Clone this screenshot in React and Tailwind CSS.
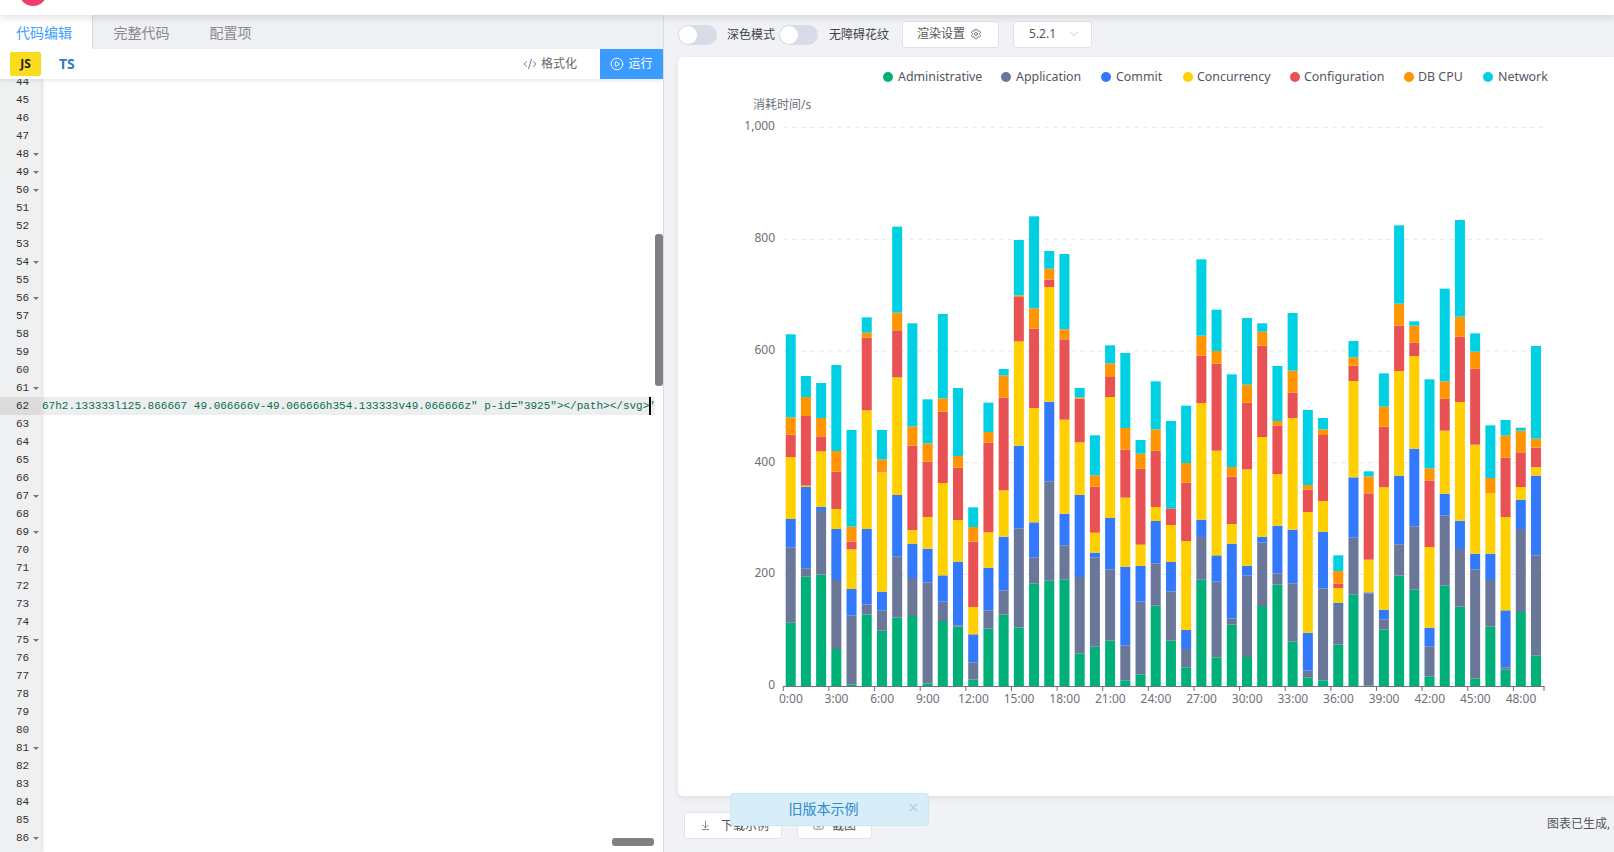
import React from "react";
import { Settings, ArrowDownToLine, Camera, ChevronDown, CirclePlay, CodeXml, X } from "lucide-react";

const COLORS = ["#00b078", "#6b7799", "#3279fb", "#ffd000", "#e95254", "#ff9500", "#00d0e3"];
const LEGEND = [
  ["Administrative", 888, 898],
  ["Application", 1006, 1016],
  ["Commit", 1106, 1116],
  ["Concurrency", 1188, 1197],
  ["Configuration", 1295, 1304],
  ["DB CPU", 1409, 1418],
  ["Network", 1488, 1498],
];
const BARS = [
  [1268,1043,957,771,704,652,403],[1130,1105,861,857,648,591,528],[1124,933,921,754,709,654,549],
  [1347,1140,987,927,815,753,495],[1453,1246,1167,1048,1025,980,690],[1244,1213,987,631,413,398,352],
  [1292,1232,1175,815,811,778,690],[1253,1069,885,532,391,338,80],[1248,1134,1031,990,737,679,370],
  [1450,1147,1046,951,785,730,598],[1263,1205,1126,849,635,595,342],[1280,1276,1085,960,803,768,564],
  [1439,1387,1303,1221,1025,981,922],[1286,1231,1103,997,728,696,608],[1244,1171,1010,871,593,526,507],
  [1282,985,737,424,291,286,120],[1151,1072,967,624,386,325,49],[1142,844,605,261,239,206,153],
  [1138,1036,941,659,418,388,162],[1360,1131,885,727,596,592,564],[1340,1072,1058,998,860,826,706],
  [1322,1108,954,591,531,490,436],[1441,1336,1100,893,749,684,459],[1423,1205,1098,1034,806,761,720],
  [1217,1090,963,921,752,688,544],[1322,1174,1086,975,925,925,663],[1402,1347,1290,1023,848,789,617],
  [1139,1011,959,609,467,407,178],[1372,1145,1066,752,491,453,329],[1274,1255,1031,972,830,801,523],
  [1371,1126,1097,808,608,554,354],[1218,1028,1011,711,437,395,370],[1154,1120,977,822,677,663,498],
  [1325,1150,989,654,578,512,339],[1432,1412,1298,936,869,855,630],[1441,1165,995,903,705,688,654],
  [1334,1215,1209,1164,1151,1113,1066],[1184,1013,832,543,497,472,423],[1456,1180,1177,1079,880,829,814],
  [1289,1258,1229,862,680,620,520],[1127,1033,827,513,377,311,76],[1169,979,746,468,428,377,364],
  [1429,1339,1283,1041,842,805,538],[1157,946,881,692,596,544,266],[1220,1047,962,606,410,350,60],
  [1435,1108,1061,734,506,455,400],[1280,1140,1061,880,880,834,676],[1408,1402,1231,951,773,706,660],
  [1236,987,899,861,757,692,683],[1366,1066,827,801,743,716,438],
];
const FOLDS = [48, 49, 50, 54, 56, 61, 67, 69, 75, 81, 86];
const LINES = Array.from({ length: 43 }, (_, i) => 44 + i);
const FONT = "'Noto Sans','Noto Sans CJK SC',sans-serif";
const MONO = "'Liberation Mono',monospace";
const toY = (z) => 200 + z / 3;

function Chart() {
  const base = 686;
  const yTicks = [[0, 686], [200, 574.3], [400, 462.7], [600, 351], [800, 239.3], [1000, 127.3]];
  const left = 783.3, step = 15.21;
  return (
    <svg viewBox="678 57 936 739" className="w-full h-full block" style={{ fontFamily: FONT }}>
      {LEGEND.map(([name, cx, tx], i) => (
        <g key={name}>
          <circle cx={cx} cy={77} r={5} fill={COLORS[i]} />
          <text x={tx} y={81} fontSize="12.4" fill="#55565f">{name}</text>
        </g>
      ))}
      <text x={753} y={109} fontSize="12" fill="#6e7079">消耗时间/s</text>
      {yTicks.map(([v, y]) => (
        <g key={v}>
          <text x={775} y={y + 3} textAnchor="end" fontSize="12" fill="#6e7079">{v.toLocaleString("en-US")}</text>
          {v > 0 && <line x1={783} x2={1543} y1={y} y2={y} stroke="#e8e8e8" strokeDasharray="5 4" />}
        </g>
      ))}
      {BARS.map((b, i) => {
        const x = 785.7 + i * step;
        let prev = base;
        return (
          <g key={i}>
            {b.map((z, s) => {
              const top = toY(z);
              const r = <rect key={s} x={x} y={top} width={10} height={Math.max(prev - top, 0)} fill={COLORS[s]} />;
              prev = top;
              return r;
            })}
          </g>
        );
      })}
      <line x1={783} x2={1544.5} y1={686.5} y2={686.5} stroke="#6e7079" />
      {Array.from({ length: 17 }, (_, i) => {
        const x = left + i * step * 3;
        return (
          <g key={i}>
            <line x1={x} x2={x} y1={686} y2={691} stroke="#6e7079" />
            <text x={x + 7.6} y={703} textAnchor="middle" fontSize="12" fill="#6e7079">{i * 3}:00</text>
          </g>
        );
      })}
      <line x1={1544} x2={1544} y1={686} y2={691} stroke="#6e7079" />
    </svg>
  );
}

function Toggle() {
  return (
    <div className="w-[39px] h-5 rounded-full bg-[#d7dce6] p-[1px] shrink-0">
      <div className="w-[18px] h-[18px] rounded-full bg-white" />
    </div>
  );
}

export default function App() {
  return (
    <div className="relative w-[1614px] h-[852px] overflow-hidden bg-[#f0f2f6] text-[12px]" style={{ fontFamily: FONT }}>
      <header className="relative h-[15px] bg-white shadow-[0_2px_9px_rgba(0,0,0,0.14)] z-20 overflow-hidden">
        <div className="absolute left-[19px] -top-[22px] w-7 h-7 rounded-full bg-[#ee3f6c]" />
      </header>
      <div className="flex h-[837px]">
        <section className="w-[664px] shrink-0 flex flex-col border-r border-[#d9dbe0] bg-white overflow-hidden">
          <div className="h-[34px] flex bg-[#eef0f3] shrink-0 text-[14px]">
            <div className="w-[93px] bg-white border-r border-[#d5d8de] text-[#409eff] flex items-center pl-[16px]">代码编辑</div>
            <div className="w-[97px] text-[#8a8a8a] flex items-center justify-center">完整代码</div>
            <div className="w-[81px] text-[#8a8a8a] flex items-center justify-center">配置项</div>
          </div>
          <div className="relative z-10 h-[30px] flex items-center bg-white shadow-[0_2px_3px_rgba(0,0,0,0.08)] shrink-0">
            <div className="ml-[10px] w-[31px] h-6 rounded-[2px] bg-[#fadc1e] text-[#222] font-bold text-[12px] flex items-center justify-center">JS</div>
            <div className="ml-[18px] mb-[1px] text-[#3178c6] font-bold text-[14px]">TS</div>
            <div className="ml-auto mr-[23px] flex items-center gap-[4px] text-[#666]">
              <CodeXml size={14} strokeWidth={1.5} />
              <span>格式化</span>
            </div>
            <div className="w-[63px] h-full bg-[#3a9cff] text-white flex items-center justify-center gap-[4px]">
              <CirclePlay size={14} strokeWidth={1.6} />
              <span>运行</span>
            </div>
          </div>
          <div className="relative flex-1 flex overflow-hidden">
            <div className="w-[41px] shrink-0 bg-[#eef0f2] shadow-[2px_0_3px_rgba(0,0,0,0.12)] -mt-[6px] relative z-[1]" style={{ fontFamily: MONO }}>
              {LINES.map((n) => (
                <div key={n} className={`relative h-[18px] leading-[18px] text-[11px] text-[#333] pl-[16px] ${n === 62 ? "bg-[#dcdcdc]" : ""}`}>
                  {n}
                  {FOLDS.includes(n) && <span className="absolute left-[33px] top-[8px] w-0 h-0 border-x-[3px] border-x-transparent border-t-[3px] border-t-[#777]" />}
                </div>
              ))}
            </div>
            <div className="flex-1 min-w-0 -mt-[6px] pl-[1px] overflow-hidden">
              <div className="h-[324px]" />
              <div className="h-[18px] w-[613px] leading-[18px] bg-[#eceef0] whitespace-pre text-[11px] text-[#0a6e4a] relative overflow-hidden" style={{ fontFamily: MONO }}>
                {`67h2.133333l125.866667 49.066666v-49.066666h354.133333v49.066666z" p-id="3925"></path></svg>'`}
                <span className="absolute left-[607px] top-0 w-[2px] h-[18px] bg-black" />
              </div>
            </div>
            <div className="absolute right-0 top-[155px] w-2 h-[152px] rounded-[3px] bg-[#808080] z-[2]" />
            <div className="absolute right-[9px] top-[759px] w-[42px] h-2 rounded-[3px] bg-[#808080] z-[2]" />
          </div>
        </section>
        <main className="flex-1 min-w-0 flex flex-col pl-[14px]">
          <div className="h-[42px] flex items-center shrink-0 text-[#444] pb-[2px]">
            <Toggle />
            <span className="ml-[10px] mr-[4px]">深色模式</span>
            <Toggle />
            <span className="ml-[11px]">无障碍花纹</span>
            <button className="ml-[13px] mb-[2px] w-[97px] h-[27px] bg-white border border-[#dfe2e8] rounded-[3px] flex items-center pl-[14px] gap-[5px] text-[#555]">
              渲染设置 <Settings size={12} strokeWidth={1.5} />
            </button>
            <button className="ml-[14px] mb-[2px] w-[79px] h-[27px] bg-white border border-[#dfe2e8] rounded-[3px] flex items-center pl-[15px] pr-[10px] justify-between text-[#555]">
              5.2.1 <ChevronDown size={14} strokeWidth={1} className="text-[#aaa]" />
            </button>
          </div>
          <div className="h-[739px] bg-white rounded-l-[5px] shadow-[0_2px_6px_rgba(0,0,0,0.08)] overflow-hidden shrink-0">
            <Chart />
          </div>
          <div className="flex-1 flex items-start pt-[16px] pl-[6px]">
            <button className="w-[98px] h-[27px] bg-white border border-[#e1e4ea] rounded-[3px] flex items-center pl-[15px] gap-[10px] text-[#555]">
              <ArrowDownToLine size={11} strokeWidth={1.5} /> 下载示例
            </button>
            <button className="ml-[15px] w-[75px] h-[27px] bg-white border border-[#e1e4ea] rounded-[3px] flex items-center justify-center gap-2 text-[#555]">
              <Camera size={11} strokeWidth={1.5} /> 截图
            </button>
            <span className="absolute left-[1547px] top-[815px] whitespace-nowrap text-[#555]">图表已生成, 用时</span>
          </div>
        </main>
      </div>
      <div className="absolute left-[730px] top-[793px] w-[199px] h-[33px] bg-[#d7edf7] border border-[#c7e7f3] rounded-[4px] flex items-center justify-center text-[#2d8ccf] text-[14px] pr-[12px] pb-[2px] z-30">
        旧版本示例
        <X size={13} strokeWidth={2.6} className="absolute right-[8px] top-[7px] text-[#b5cfe0]" />
      </div>
    </div>
  );
}
